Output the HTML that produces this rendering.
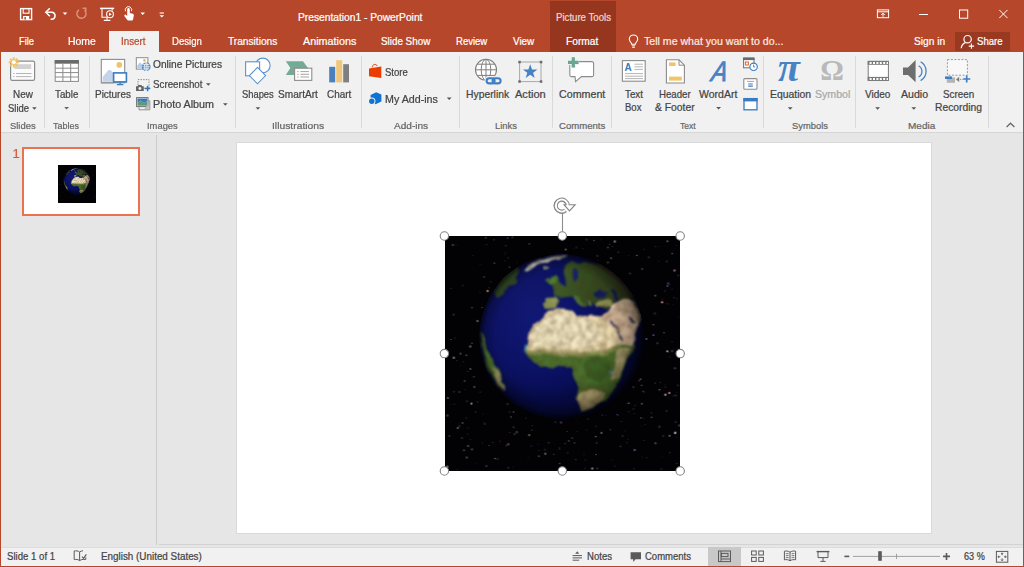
<!DOCTYPE html>
<html><head><meta charset="utf-8"><title>Presentation1 - PowerPoint</title>
<style>
*{box-sizing:border-box;margin:0;padding:0}
html,body{width:1024px;height:567px;overflow:hidden;background:#e6e6e6;font-family:"Liberation Sans",sans-serif}
.abs,.t{position:absolute}
.t{white-space:nowrap;line-height:1;transform-origin:0 0;-webkit-text-stroke:.22px currentColor}
.h{position:absolute;width:9.4px;height:9.4px;border-radius:50%;background:#fff;border:1px solid #7a7a7a;margin:-4.7px 0 0 -4.7px}
</style></head><body>
<svg width="0" height="0" style="position:absolute">
<defs>
<radialGradient id="oc" cx="0.36" cy="0.42" r="0.75">
<stop offset="0" stop-color="#0b1272"/><stop offset=".4" stop-color="#090f62"/><stop offset=".75" stop-color="#060a44"/><stop offset="1" stop-color="#02031a"/>
</radialGradient>
<radialGradient id="sh" cx="0.42" cy="0.4" r="0.72">
<stop offset="0" stop-color="#000" stop-opacity="0"/><stop offset=".55" stop-color="#000" stop-opacity="0"/><stop offset=".82" stop-color="#000" stop-opacity=".3"/><stop offset="1" stop-color="#000" stop-opacity=".88"/>
</radialGradient>
<radialGradient id="lb" cx="0.5" cy="0.5" r="0.5">
<stop offset="0" stop-color="#000" stop-opacity="0"/><stop offset=".8" stop-color="#000" stop-opacity="0"/><stop offset=".93" stop-color="#000" stop-opacity=".22"/><stop offset="1" stop-color="#000" stop-opacity=".7"/>
</radialGradient>
<radialGradient id="hl" cx="0.33" cy="0.3" r="0.6">
<stop offset="0" stop-color="#fff" stop-opacity=".03"/><stop offset="1" stop-color="#fff" stop-opacity="0"/>
</radialGradient>
<linearGradient id="eu" x1="0" y1="0" x2="1" y2="0"><stop offset="0" stop-color="#3c5c27"/><stop offset=".45" stop-color="#304a1d"/><stop offset="1" stop-color="#23301a"/></linearGradient>
<filter id="bl" x="-5%" y="-5%" width="110%" height="110%" color-interpolation-filters="sRGB">
<feTurbulence type="fractalNoise" baseFrequency="0.08" numOctaves="2" seed="4" result="n"/>
<feDisplacementMap in="SourceGraphic" in2="n" scale="6" xChannelSelector="R" yChannelSelector="G" result="d"/>
<feGaussianBlur in="d" stdDeviation="0.95" result="b"/>
<feTurbulence type="fractalNoise" baseFrequency="0.14" numOctaves="2" seed="9" result="n2"/>
<feColorMatrix in="n2" type="matrix" values="0 0 0 0 .28  0 0 0 0 .2  0 0 0 0 .08  0.8 0 0 0 -0.26" result="a"/>
<feGaussianBlur in="a" stdDeviation="0.8" result="a2"/>
<feComposite in="a2" in2="b" operator="in" result="dark"/>
<feMerge><feMergeNode in="b"/><feMergeNode in="dark"/></feMerge>
</filter>
<filter id="sb" x="-5%" y="-5%" width="110%" height="110%"><feGaussianBlur stdDeviation="0.45"/></filter>
<filter id="bl2" x="-20%" y="-20%" width="140%" height="140%"><feGaussianBlur stdDeviation="2.2"/></filter>
<clipPath id="gc"><circle cx="561" cy="336.6" r="82"/></clipPath>
<symbol id="earth" viewBox="444.5 236 235.5 235" preserveAspectRatio="none">
<rect x="444.5" y="236" width="235.5" height="235" fill="#020204"/>
<g filter="url(#sb)"><circle cx="462.9" cy="361.9" r="0.55" fill="#a8a0ff" opacity="0.32"/><circle cx="454.7" cy="338.0" r="0.65" fill="#8080d0" opacity="0.32"/><circle cx="582.4" cy="248.6" r="0.75" fill="#8080d0" opacity="0.2"/><circle cx="479.6" cy="264.4" r="0.75" fill="#a8a0ff" opacity="0.13"/><circle cx="568.4" cy="440.9" r="0.9" fill="#d8d0ff" opacity="0.32"/><circle cx="601.7" cy="415.1" r="1.0" fill="#c080c0" opacity="0.2"/><circle cx="641.7" cy="457.1" r="0.65" fill="#ffe0a0" opacity="0.13"/><circle cx="596.8" cy="468.4" r="0.9" fill="#8080d0" opacity="0.42"/><circle cx="538.7" cy="450.6" r="0.75" fill="#8080d0" opacity="0.26"/><circle cx="574.0" cy="442.8" r="0.9" fill="#8080d0" opacity="0.42"/><circle cx="675.8" cy="396.1" r="0.8" fill="#d8d0ff" opacity="0.16"/><circle cx="487.1" cy="291.0" r="1.25" fill="#ffb0a0" opacity="0.6"/><circle cx="507.2" cy="238.0" r="1.0" fill="#c080c0" opacity="0.32"/><circle cx="668.1" cy="397.9" r="0.55" fill="#8080d0" opacity="0.26"/><circle cx="469.9" cy="369.1" r="1.0" fill="#ffffff" opacity="0.32"/><circle cx="462.4" cy="285.5" r="0.9" fill="#c080c0" opacity="0.2"/><circle cx="673.8" cy="348.9" r="0.75" fill="#c080c0" opacity="0.13"/><circle cx="467.2" cy="434.0" r="0.75" fill="#a8a0ff" opacity="0.2"/><circle cx="644.7" cy="424.8" r="0.8" fill="#e0a0a0" opacity="0.16"/><circle cx="528.8" cy="243.8" r="0.9" fill="#ffe0a0" opacity="0.26"/><circle cx="634.4" cy="405.5" r="1.0" fill="#a8a0ff" opacity="0.13"/><circle cx="469.8" cy="346.5" r="1.25" fill="#ffffff" opacity="0.32"/><circle cx="628.3" cy="411.8" r="0.75" fill="#c080c0" opacity="0.26"/><circle cx="466.2" cy="457.5" r="1.25" fill="#d8d0ff" opacity="0.26"/><circle cx="450.4" cy="339.5" r="0.55" fill="#ffb0a0" opacity="0.6"/><circle cx="575.4" cy="419.7" r="0.55" fill="#a8a0ff" opacity="0.16"/><circle cx="510.5" cy="416.9" r="0.55" fill="#d8d0ff" opacity="0.6"/><circle cx="641.7" cy="269.0" r="1.25" fill="#d8d0ff" opacity="0.2"/><circle cx="664.9" cy="386.9" r="0.9" fill="#e0a0a0" opacity="0.16"/><circle cx="497.2" cy="458.9" r="1.25" fill="#a8a0ff" opacity="0.16"/><circle cx="614.3" cy="241.5" r="1.25" fill="#ffffff" opacity="0.42"/><circle cx="499.3" cy="441.2" r="0.9" fill="#ffb0a0" opacity="0.13"/><circle cx="509.0" cy="267.2" r="0.9" fill="#ffb0a0" opacity="0.26"/><circle cx="488.7" cy="445.6" r="0.55" fill="#d8d0ff" opacity="0.42"/><circle cx="461.5" cy="438.0" r="1.0" fill="#8080d0" opacity="0.32"/><circle cx="661.9" cy="299.4" r="0.8" fill="#ffb0a0" opacity="0.13"/><circle cx="633.3" cy="468.7" r="0.55" fill="#a8a0ff" opacity="0.42"/><circle cx="492.3" cy="442.5" r="0.75" fill="#c080c0" opacity="0.26"/><circle cx="674.8" cy="432.0" r="0.9" fill="#ffb0a0" opacity="0.26"/><circle cx="458.9" cy="392.0" r="0.9" fill="#a8a0ff" opacity="0.32"/><circle cx="607.4" cy="247.5" r="0.9" fill="#ffffff" opacity="0.26"/><circle cx="507.6" cy="257.9" r="0.55" fill="#ffffff" opacity="0.26"/><circle cx="669.1" cy="435.8" r="1.1" fill="#c080c0" opacity="0.6"/><circle cx="611.7" cy="459.8" r="0.65" fill="#ffffff" opacity="0.13"/><circle cx="477.0" cy="321.0" r="1.25" fill="#ffffff" opacity="0.32"/><circle cx="504.8" cy="254.3" r="0.8" fill="#e0a0a0" opacity="0.16"/><circle cx="605.3" cy="415.7" r="0.8" fill="#ffb0a0" opacity="0.13"/><circle cx="559.2" cy="463.6" r="0.8" fill="#e0a0a0" opacity="0.42"/><circle cx="671.6" cy="341.7" r="0.8" fill="#d8d0ff" opacity="0.16"/><circle cx="564.5" cy="443.6" r="0.8" fill="#e0a0a0" opacity="0.26"/><circle cx="538.8" cy="456.0" r="0.55" fill="#ffe0a0" opacity="0.42"/><circle cx="505.0" cy="252.1" r="0.65" fill="#8080d0" opacity="0.2"/><circle cx="622.1" cy="436.0" r="0.55" fill="#ffe0a0" opacity="0.6"/><circle cx="663.5" cy="332.7" r="0.75" fill="#ffe0a0" opacity="0.42"/><circle cx="559.1" cy="449.5" r="0.75" fill="#8080d0" opacity="0.26"/><circle cx="673.5" cy="297.6" r="0.9" fill="#8080d0" opacity="0.26"/><circle cx="473.9" cy="386.9" r="1.25" fill="#a8a0ff" opacity="0.32"/><circle cx="531.8" cy="425.6" r="0.55" fill="#8080d0" opacity="0.42"/><circle cx="509.0" cy="412.2" r="1.0" fill="#a8a0ff" opacity="0.16"/><circle cx="467.6" cy="446.0" r="1.25" fill="#ffe0a0" opacity="0.26"/><circle cx="643.7" cy="440.4" r="0.55" fill="#e0a0a0" opacity="0.26"/><circle cx="671.6" cy="351.1" r="1.25" fill="#a8a0ff" opacity="0.26"/><circle cx="465.8" cy="418.0" r="0.75" fill="#ffffff" opacity="0.16"/><circle cx="586.0" cy="239.4" r="1.25" fill="#c080c0" opacity="0.2"/><circle cx="596.2" cy="442.9" r="0.8" fill="#a8a0ff" opacity="0.32"/><circle cx="596.8" cy="255.9" r="1.1" fill="#a8a0ff" opacity="0.2"/><circle cx="514.1" cy="433.9" r="1.25" fill="#ffe0a0" opacity="0.16"/><circle cx="507.8" cy="444.2" r="1.25" fill="#ffb0a0" opacity="0.32"/><circle cx="472.4" cy="255.5" r="0.8" fill="#e0a0a0" opacity="0.16"/><circle cx="453.4" cy="391.8" r="1.0" fill="#e0a0a0" opacity="0.2"/><circle cx="485.4" cy="237.7" r="1.0" fill="#d8d0ff" opacity="0.26"/><circle cx="466.4" cy="401.3" r="1.25" fill="#c080c0" opacity="0.16"/><circle cx="530.9" cy="446.0" r="1.1" fill="#8080d0" opacity="0.16"/><circle cx="455.5" cy="245.1" r="0.55" fill="#a8a0ff" opacity="0.2"/><circle cx="620.1" cy="446.4" r="0.9" fill="#ffffff" opacity="0.2"/><circle cx="507.1" cy="404.0" r="0.9" fill="#ffffff" opacity="0.2"/><circle cx="471.0" cy="403.7" r="1.1" fill="#ffe0a0" opacity="0.6"/><circle cx="658.9" cy="426.8" r="1.25" fill="#ffffff" opacity="0.16"/><circle cx="633.0" cy="409.1" r="0.75" fill="#a8a0ff" opacity="0.32"/><circle cx="628.3" cy="255.4" r="0.75" fill="#8080d0" opacity="0.16"/><circle cx="676.2" cy="298.7" r="0.65" fill="#e0a0a0" opacity="0.26"/><circle cx="676.3" cy="463.5" r="0.75" fill="#e0a0a0" opacity="0.26"/><circle cx="643.3" cy="391.8" r="0.9" fill="#ffe0a0" opacity="0.2"/><circle cx="481.7" cy="443.0" r="1.0" fill="#8080d0" opacity="0.13"/><circle cx="597.4" cy="260.4" r="0.55" fill="#ffffff" opacity="0.13"/><circle cx="659.0" cy="246.4" r="0.65" fill="#a8a0ff" opacity="0.13"/><circle cx="585.9" cy="429.9" r="0.65" fill="#ffb0a0" opacity="0.2"/><circle cx="666.3" cy="261.6" r="1.0" fill="#ffffff" opacity="0.16"/><circle cx="493.4" cy="239.7" r="1.0" fill="#ffe0a0" opacity="0.16"/><circle cx="676.3" cy="392.6" r="0.55" fill="#c080c0" opacity="0.2"/><circle cx="632.9" cy="387.2" r="1.1" fill="#ffffff" opacity="0.16"/><circle cx="467.1" cy="371.6" r="0.75" fill="#ffffff" opacity="0.16"/><circle cx="483.7" cy="277.0" r="1.1" fill="#a8a0ff" opacity="0.26"/><circle cx="516.3" cy="432.1" r="1.25" fill="#ffffff" opacity="0.2"/><circle cx="595.2" cy="436.6" r="0.8" fill="#e0a0a0" opacity="0.6"/><circle cx="488.6" cy="287.8" r="0.75" fill="#c080c0" opacity="0.26"/><circle cx="655.1" cy="246.6" r="0.55" fill="#c080c0" opacity="0.42"/><circle cx="473.4" cy="376.7" r="0.9" fill="#8080d0" opacity="0.42"/><circle cx="446.8" cy="466.8" r="1.25" fill="#e0a0a0" opacity="0.6"/><circle cx="640.9" cy="425.9" r="0.65" fill="#c080c0" opacity="0.16"/><circle cx="565.2" cy="249.6" r="1.1" fill="#ffb0a0" opacity="0.42"/><circle cx="607.4" cy="262.5" r="1.25" fill="#ffb0a0" opacity="0.2"/><circle cx="640.1" cy="379.2" r="1.0" fill="#ffe0a0" opacity="0.32"/><circle cx="656.9" cy="343.3" r="1.25" fill="#ffe0a0" opacity="0.16"/><circle cx="654.8" cy="295.7" r="1.1" fill="#c080c0" opacity="0.42"/><circle cx="507.7" cy="467.8" r="1.0" fill="#d8d0ff" opacity="0.2"/><circle cx="457.3" cy="428.0" r="1.0" fill="#ffffff" opacity="0.42"/><circle cx="531.3" cy="430.0" r="0.55" fill="#a8a0ff" opacity="0.6"/><circle cx="479.7" cy="392.1" r="0.9" fill="#ffffff" opacity="0.13"/><circle cx="456.3" cy="360.8" r="0.8" fill="#ffffff" opacity="0.16"/><circle cx="658.4" cy="261.4" r="0.8" fill="#8080d0" opacity="0.16"/><circle cx="595.5" cy="426.5" r="0.9" fill="#ffe0a0" opacity="0.13"/><circle cx="591.8" cy="468.6" r="1.25" fill="#ffffff" opacity="0.42"/><circle cx="464.8" cy="389.7" r="0.65" fill="#a8a0ff" opacity="0.2"/><circle cx="661.6" cy="456.7" r="0.55" fill="#8080d0" opacity="0.2"/><circle cx="465.9" cy="355.2" r="0.8" fill="#a8a0ff" opacity="0.6"/><circle cx="666.1" cy="410.9" r="1.1" fill="#a8a0ff" opacity="0.2"/><circle cx="674.7" cy="433.1" r="1.25" fill="#ffffff" opacity="0.6"/><circle cx="645.8" cy="338.9" r="0.9" fill="#a8a0ff" opacity="0.6"/><circle cx="486.0" cy="244.7" r="0.75" fill="#ffb0a0" opacity="0.2"/><circle cx="609.3" cy="244.2" r="0.55" fill="#d8d0ff" opacity="0.42"/><circle cx="617.7" cy="252.3" r="1.0" fill="#d8d0ff" opacity="0.16"/><circle cx="651.0" cy="413.1" r="1.1" fill="#a8a0ff" opacity="0.13"/><circle cx="493.9" cy="263.1" r="0.65" fill="#ffe0a0" opacity="0.6"/><circle cx="453.3" cy="357.8" r="1.25" fill="#ffffff" opacity="0.42"/><circle cx="467.2" cy="428.0" r="0.55" fill="#a8a0ff" opacity="0.32"/><circle cx="513.2" cy="411.9" r="1.0" fill="#d8d0ff" opacity="0.26"/><circle cx="560.5" cy="422.6" r="1.25" fill="#c080c0" opacity="0.32"/><circle cx="669.0" cy="357.0" r="0.75" fill="#a8a0ff" opacity="0.2"/><circle cx="664.6" cy="290.9" r="0.65" fill="#d8d0ff" opacity="0.26"/><circle cx="537.9" cy="444.5" r="0.55" fill="#a8a0ff" opacity="0.2"/><circle cx="485.9" cy="465.9" r="1.25" fill="#ffffff" opacity="0.16"/><circle cx="642.4" cy="391.3" r="0.75" fill="#e0a0a0" opacity="0.26"/><circle cx="638.6" cy="380.8" r="0.8" fill="#c080c0" opacity="0.42"/><circle cx="677.8" cy="275.4" r="0.8" fill="#ffb0a0" opacity="0.26"/><circle cx="675.2" cy="422.2" r="1.1" fill="#a8a0ff" opacity="0.2"/><circle cx="471.5" cy="449.4" r="1.1" fill="#ffffff" opacity="0.26"/><circle cx="448.9" cy="436.1" r="0.8" fill="#ffe0a0" opacity="0.32"/><circle cx="651.1" cy="417.4" r="0.8" fill="#ffb0a0" opacity="0.42"/><circle cx="628.3" cy="403.2" r="0.9" fill="#8080d0" opacity="0.6"/><circle cx="654.4" cy="313.4" r="1.25" fill="#ffffff" opacity="0.13"/><circle cx="667.7" cy="283.6" r="1.25" fill="#a8a0ff" opacity="0.32"/><circle cx="666.9" cy="286.0" r="1.1" fill="#d8d0ff" opacity="0.32"/><circle cx="463.5" cy="450.3" r="1.0" fill="#ffe0a0" opacity="0.32"/><circle cx="471.5" cy="307.7" r="0.8" fill="#8080d0" opacity="0.6"/><circle cx="462.1" cy="423.0" r="0.8" fill="#ffb0a0" opacity="0.6"/><circle cx="528.7" cy="435.2" r="1.1" fill="#ffe0a0" opacity="0.42"/><circle cx="675.0" cy="395.2" r="0.9" fill="#a8a0ff" opacity="0.2"/><circle cx="481.6" cy="307.6" r="0.65" fill="#c080c0" opacity="0.6"/><circle cx="593.5" cy="240.5" r="0.65" fill="#ffe0a0" opacity="0.42"/><circle cx="504.3" cy="260.7" r="0.8" fill="#e0a0a0" opacity="0.16"/><circle cx="587.7" cy="419.0" r="0.9" fill="#e0a0a0" opacity="0.16"/><circle cx="548.2" cy="442.7" r="0.9" fill="#a8a0ff" opacity="0.26"/><circle cx="558.9" cy="448.0" r="0.8" fill="#ffb0a0" opacity="0.26"/><circle cx="571.7" cy="438.1" r="1.0" fill="#e0a0a0" opacity="0.26"/><circle cx="601.0" cy="432.9" r="1.1" fill="#d8d0ff" opacity="0.42"/><circle cx="678.8" cy="425.4" r="1.25" fill="#ffb0a0" opacity="0.26"/><circle cx="453.9" cy="404.3" r="1.0" fill="#c080c0" opacity="0.13"/><circle cx="525.5" cy="418.4" r="0.8" fill="#8080d0" opacity="0.2"/><circle cx="475.7" cy="463.7" r="0.55" fill="#8080d0" opacity="0.26"/><circle cx="573.1" cy="248.6" r="0.55" fill="#a8a0ff" opacity="0.13"/><circle cx="460.0" cy="353.7" r="1.1" fill="#ffb0a0" opacity="0.32"/><circle cx="659.0" cy="389.8" r="0.75" fill="#ffe0a0" opacity="0.6"/><circle cx="595.5" cy="454.6" r="0.55" fill="#d8d0ff" opacity="0.6"/><circle cx="584.4" cy="468.4" r="0.75" fill="#8080d0" opacity="0.26"/><circle cx="654.7" cy="383.1" r="0.55" fill="#d8d0ff" opacity="0.42"/><circle cx="675.9" cy="437.0" r="0.65" fill="#e0a0a0" opacity="0.16"/><circle cx="450.1" cy="404.6" r="0.75" fill="#c080c0" opacity="0.13"/><circle cx="626.3" cy="403.3" r="0.65" fill="#e0a0a0" opacity="0.2"/><circle cx="553.3" cy="454.2" r="0.55" fill="#ffffff" opacity="0.42"/><circle cx="636.4" cy="255.6" r="0.75" fill="#e0a0a0" opacity="0.6"/><circle cx="484.2" cy="423.8" r="1.25" fill="#c080c0" opacity="0.2"/><circle cx="609.9" cy="429.8" r="0.55" fill="#ffb0a0" opacity="0.6"/><circle cx="652.9" cy="324.8" r="0.8" fill="#e0a0a0" opacity="0.6"/><circle cx="512.0" cy="237.4" r="1.1" fill="#ffffff" opacity="0.16"/><circle cx="614.3" cy="465.9" r="0.55" fill="#8080d0" opacity="0.42"/><circle cx="621.0" cy="421.5" r="0.65" fill="#c080c0" opacity="0.32"/><circle cx="655.0" cy="443.2" r="1.25" fill="#a8a0ff" opacity="0.32"/><circle cx="490.1" cy="281.8" r="0.9" fill="#c080c0" opacity="0.2"/><circle cx="456.4" cy="469.3" r="0.65" fill="#e0a0a0" opacity="0.2"/><circle cx="629.5" cy="273.4" r="1.0" fill="#ffffff" opacity="0.2"/><circle cx="661.6" cy="302.2" r="1.25" fill="#ffb0a0" opacity="0.6"/><circle cx="505.2" cy="245.8" r="0.75" fill="#d8d0ff" opacity="0.26"/><circle cx="452.4" cy="245.1" r="1.25" fill="#d8d0ff" opacity="0.26"/><circle cx="610.6" cy="258.0" r="0.8" fill="#d8d0ff" opacity="0.42"/><circle cx="668.8" cy="393.0" r="1.25" fill="#ffb0a0" opacity="0.6"/><circle cx="459.8" cy="365.8" r="0.55" fill="#e0a0a0" opacity="0.2"/><circle cx="664.9" cy="394.7" r="1.25" fill="#d8d0ff" opacity="0.6"/><circle cx="634.2" cy="450.0" r="1.25" fill="#a8a0ff" opacity="0.42"/><circle cx="464.1" cy="381.1" r="0.75" fill="#e0a0a0" opacity="0.6"/><circle cx="669.2" cy="452.7" r="0.55" fill="#d8d0ff" opacity="0.42"/><circle cx="509.2" cy="432.6" r="0.75" fill="#e0a0a0" opacity="0.2"/><circle cx="471.5" cy="343.3" r="0.75" fill="#ffffff" opacity="0.32"/><circle cx="576.5" cy="431.6" r="0.8" fill="#8080d0" opacity="0.2"/><circle cx="676.9" cy="469.6" r="0.65" fill="#ffe0a0" opacity="0.26"/><circle cx="674.0" cy="270.6" r="1.25" fill="#c080c0" opacity="0.6"/><circle cx="665.9" cy="303.7" r="0.55" fill="#a8a0ff" opacity="0.26"/><circle cx="616.3" cy="414.4" r="0.75" fill="#a8a0ff" opacity="0.32"/><circle cx="458.9" cy="425.9" r="1.25" fill="#ffffff" opacity="0.13"/><circle cx="675.7" cy="245.5" r="0.55" fill="#e0a0a0" opacity="0.2"/><circle cx="671.7" cy="253.6" r="0.8" fill="#c080c0" opacity="0.6"/><circle cx="627.5" cy="439.3" r="0.55" fill="#d8d0ff" opacity="0.2"/><circle cx="668.3" cy="352.3" r="0.75" fill="#a8a0ff" opacity="0.13"/><circle cx="671.4" cy="289.1" r="0.65" fill="#ffe0a0" opacity="0.2"/><circle cx="575.4" cy="459.6" r="0.8" fill="#ffffff" opacity="0.2"/><circle cx="641.1" cy="385.4" r="0.8" fill="#e0a0a0" opacity="0.42"/><circle cx="470.0" cy="439.6" r="0.55" fill="#d8d0ff" opacity="0.2"/><circle cx="666.9" cy="241.3" r="1.1" fill="#ffffff" opacity="0.32"/><circle cx="538.2" cy="456.3" r="1.0" fill="#a8a0ff" opacity="0.26"/><circle cx="641.4" cy="403.7" r="1.0" fill="#8080d0" opacity="0.6"/><circle cx="643.5" cy="249.5" r="1.0" fill="#8080d0" opacity="0.16"/><circle cx="600.5" cy="239.7" r="0.75" fill="#c080c0" opacity="0.13"/><circle cx="664.3" cy="384.5" r="0.55" fill="#ffe0a0" opacity="0.13"/><circle cx="659.9" cy="382.3" r="0.55" fill="#d8d0ff" opacity="0.32"/><circle cx="667.6" cy="304.0" r="0.75" fill="#ffffff" opacity="0.13"/><circle cx="584.5" cy="459.8" r="0.9" fill="#e0a0a0" opacity="0.13"/><circle cx="583.5" cy="454.1" r="0.75" fill="#8080d0" opacity="0.2"/><circle cx="453.2" cy="314.7" r="1.1" fill="#8080d0" opacity="0.32"/><circle cx="512.4" cy="467.1" r="0.55" fill="#d8d0ff" opacity="0.16"/><circle cx="566.5" cy="431.4" r="0.65" fill="#a8a0ff" opacity="0.32"/><circle cx="660.8" cy="469.0" r="0.75" fill="#d8d0ff" opacity="0.26"/><circle cx="447.0" cy="415.4" r="1.25" fill="#ffb0a0" opacity="0.26"/><circle cx="669.4" cy="284.6" r="0.55" fill="#ffffff" opacity="0.13"/><circle cx="505.8" cy="445.7" r="0.9" fill="#8080d0" opacity="0.32"/><circle cx="527.8" cy="457.9" r="0.8" fill="#8080d0" opacity="0.13"/><circle cx="678.1" cy="317.0" r="0.65" fill="#c080c0" opacity="0.16"/><circle cx="652.9" cy="335.1" r="0.9" fill="#a8a0ff" opacity="0.6"/><circle cx="677.5" cy="385.3" r="1.1" fill="#ffffff" opacity="0.13"/><circle cx="516.9" cy="433.2" r="0.55" fill="#ffb0a0" opacity="0.16"/><circle cx="482.5" cy="414.0" r="0.65" fill="#ffb0a0" opacity="0.13"/><circle cx="666.8" cy="351.3" r="1.1" fill="#ffffff" opacity="0.6"/><circle cx="479.5" cy="292.5" r="0.55" fill="#d8d0ff" opacity="0.2"/><circle cx="646.2" cy="457.8" r="0.8" fill="#8080d0" opacity="0.26"/><circle cx="450.6" cy="288.3" r="0.55" fill="#ffffff" opacity="0.26"/><circle cx="662.9" cy="436.1" r="1.25" fill="#8080d0" opacity="0.2"/><circle cx="586.4" cy="460.7" r="0.65" fill="#8080d0" opacity="0.16"/><circle cx="648.3" cy="257.4" r="1.1" fill="#ffffff" opacity="0.16"/><circle cx="672.4" cy="304.7" r="0.65" fill="#8080d0" opacity="0.2"/><circle cx="544.4" cy="449.7" r="1.1" fill="#e0a0a0" opacity="0.16"/><circle cx="610.5" cy="258.6" r="0.75" fill="#e0a0a0" opacity="0.32"/><circle cx="554.8" cy="422.2" r="1.0" fill="#a8a0ff" opacity="0.2"/><circle cx="494.5" cy="458.6" r="0.8" fill="#e0a0a0" opacity="0.6"/><circle cx="475.2" cy="411.9" r="0.65" fill="#ffe0a0" opacity="0.32"/><circle cx="617.5" cy="415.2" r="0.75" fill="#ffffff" opacity="0.2"/><circle cx="644.3" cy="311.8" r="0.65" fill="#c080c0" opacity="0.13"/><circle cx="633.6" cy="413.7" r="0.9" fill="#a8a0ff" opacity="0.13"/><circle cx="513.2" cy="427.3" r="1.0" fill="#e0a0a0" opacity="0.26"/><circle cx="626.6" cy="442.7" r="0.75" fill="#ffb0a0" opacity="0.2"/><circle cx="612.0" cy="246.4" r="0.75" fill="#a8a0ff" opacity="0.26"/><circle cx="567.3" cy="452.7" r="1.0" fill="#d8d0ff" opacity="0.13"/><circle cx="640.4" cy="417.9" r="0.55" fill="#ffffff" opacity="0.6"/><circle cx="673.0" cy="395.7" r="1.0" fill="#c080c0" opacity="0.16"/><circle cx="544.8" cy="453.7" r="1.25" fill="#ffffff" opacity="0.32"/><circle cx="643.2" cy="418.3" r="0.8" fill="#ffe0a0" opacity="0.13"/><circle cx="447.4" cy="398.1" r="1.0" fill="#ffe0a0" opacity="0.42"/><circle cx="477.1" cy="401.9" r="0.8" fill="#d8d0ff" opacity="0.2"/><circle cx="624.5" cy="430.7" r="0.9" fill="#c080c0" opacity="0.13"/><circle cx="516.8" cy="262.8" r="0.65" fill="#c080c0" opacity="0.16"/><circle cx="575.9" cy="247.6" r="1.25" fill="#c080c0" opacity="0.13"/><circle cx="674.4" cy="368.3" r="1.25" fill="#e0a0a0" opacity="0.26"/></g>
<circle cx="561" cy="336.6" r="82.5" fill="#010208"/>
<circle cx="561" cy="336.6" r="82" fill="url(#oc)"/>
<g clip-path="url(#gc)">
<g filter="url(#bl)">
<!-- north america -->
<path d="M494 292 L498 280 L506 270 L516 264 L520 270 L514 276 L516 284 L508 286 L503 294 L497 297z" fill="#2f4f24"/>
<!-- greenland / ice -->
<path d="M524 271 L528 264 L540 259 L556 255.5 L568 255.8 L562 258.4 L548 261.4 L536 266 L528 271.6z" fill="#e4e4d8"/>
<path d="M543.6 267.6 l4 -1 l1 1.6 l-4 1.2z" fill="#b9c29a"/>
<!-- south america -->
<path d="M479 330 L482.6 333 L485.4 348 L491.6 362 L501 374 L503 382 L504 392 L498 386 L491 375 L484 360 L480.4 346z" fill="#5a8a34"/>
<path d="M492 366 L500 375 L502.6 383 L503.6 391 L499 386 L494 376z" fill="#b9b078"/>
<!-- europe main -->
<path d="M553 289 L551 284 L556 281 L560 284 L565.6 285.6 L565 279 L563 272 L566 265 L572 262 L580 263 L590 262 L602 266 L616 276 L627 287 L634 299 L628 300 L622 302 L616 300 L611 304 L608 309 L600 308 L594 305 L590 301 L586 300 L588 306 L584 306 L578 300 L572 296 L566 297 L560 298 L555 296z" fill="url(#eu)"/>
<path d="M596 262 L612 270 L626 284 L636 300 L640 312 L632 300 L620 286 L606 272z" fill="#3a3a22"/>
<!-- britain -->
<path d="M548 282 l3 -5 l4 -2 l2 4 l-2 5 l-5 2z" fill="#4b7d2c"/>
<path d="M545.6 281 l2 -2.4 l1.4 2 l-1.8 2.4z" fill="#4b7d2c"/>
<!-- baltic / north sea -->
<path d="M571 270 l3 -2 l3 4 l1 7 l-3 3 l-2 -5z" fill="#0c1a70"/>
<!-- iberia -->
<path d="M542.4 303.4 L545.6 298 L556.4 297.6 L558.6 302.6 L553.6 308.4 L544.4 308.8z" fill="#8f9a54"/>
<!-- italy greece turkey -->
<path d="M571 296 L575 296 L581 302 L585.6 307 L583 307.6 L577 302z" fill="#4f7a30"/>
<path d="M586 300 l4 1 l1.6 5 l-3 -.6z" fill="#5f7f38"/>
<path d="M593.6 303.4 L600 300.4 L610 300.6 L612 305 L604 307.6 L596 307z" fill="#8a8a52"/>
<!-- black sea, caspian -->
<path d="M593.4 293 L599 290.4 L607.6 292.6 L606 297.4 L598 298z" fill="#0a1560"/>
<path d="M611.6 288 L616 291 L620.6 299 L618 301.4 L613.6 295.6z" fill="#081050"/>
<!-- africa green -->
<path d="M524.6 350 L540 350 L576 352 L604 350.6 L618 344 L634 344 L629 356 L620 374 L609.6 395 L594 407.6 L581 411.6 L575.4 399 L578.4 386.4 L572 377.6 L572.6 370 L561.8 366 L548 368 L540.4 367 L530 359z" fill="#4a702c"/>
<path d="M584 360 L606 356 L612 372 L600 384 L586 378z" fill="#3a6224"/>
<!-- southern africa dry -->
<path d="M578 392 L590 388 L604 392 L600 402 L590 408.6 L581 411 L576 400z" fill="#b8a874"/>
<path d="M616 350 L630 346 L626 360 L616 378 L610 380 L614 364z" fill="#a8a070"/>
<!-- sahara -->
<path d="M524.4 350.6 L526.2 344 L528.2 333 L539.6 319 L547.6 311 L561.6 308.4 L571.4 309.4 L576 315.6 L586.4 318.2 L590 314.6 L600.6 315.6 L609.4 310.4 L611 305 L623.4 298 L634 303.4 L640 316 L637 330 L631 345 L618.4 344.6 L604 351.4 L576 353.4 L540.6 351.6z" fill="#ead8ae"/>
<path d="M600 316 L610 310 L622 300 L634 304 L640 316 L637 330 L631 345 L619 344 L612 330z" fill="#d4b89c"/>
<path d="M530 334 L544 318 L566 312 L580 320 L596 324 L604 338 L590 347 L556 348 L534 346z" fill="#f4e8c4"/>
<path d="M524 349 L545 349.5 L580 351 L606 349 L620 343 L621 347 L606 354.5 L578 356.5 L542 355 L525 354z" fill="#98965a" opacity=".7"/>
<!-- red sea / gulf -->
<path d="M609.4 320 L611 319.6 L622 341 L620.6 342.4z" fill="#141a50"/>
<path d="M625 315 l7 2.6 l3.4 4 l-2 .6 l-4.6 -3.6z" fill="#141a50"/>
<!-- lake victoria -->
<circle cx="611" cy="371.6" r="2" fill="#3b8fb0"/>
<!-- coast glow -->
<path d="M524.4 351 l1 -8" stroke="#2f8fa8" stroke-width="1.6" fill="none"/>
</g>
<circle cx="561" cy="336.6" r="82" fill="url(#hl)"/>
<circle cx="561" cy="336.6" r="82" fill="url(#sh)"/>
<circle cx="561" cy="336.6" r="82.4" fill="url(#lb)"/>
</g>
</symbol>
</defs></svg>
<div class="abs" style="left:0;top:0;width:1024px;height:52px;background:#b7472a"></div>
<div class="abs" style="left:550px;top:1px;width:66px;height:51px;background:#96361f"></div>
<div class="abs" style="left:109px;top:31px;width:50px;height:21px;background:#f1f1f1"></div>
<div class="abs" style="left:954.5px;top:31.5px;width:55px;height:19.5px;background:#993921"></div>
<div class="abs" style="left:1px;top:52px;width:1022px;height:80px;background:#f1f1f1"></div>
<div class="abs" style="left:1px;top:132px;width:1022px;height:1px;background:#d6d6d6"></div>
<div class="abs" style="left:156px;top:135px;width:1px;height:410px;background:#cdcdcd"></div>
<div class="abs" style="left:159px;top:544px;width:864px;height:1px;background:#d2d2d2"></div>
<div class="abs" style="left:1px;top:547px;width:1022px;height:19px;background:#f1f1f1;border-top:1px solid #dcdcdc"></div>
<div class="abs" style="left:708px;top:547px;width:32.5px;height:19px;background:#c8c8c8"></div>
<div class="abs" style="left:235.5px;top:141.5px;width:696px;height:392px;background:#fff;border:1px solid #d9d9d9"></div>
<div class="abs" style="left:21.5px;top:147px;width:118.5px;height:68.5px;background:#fff;border:2px solid #ea7250"></div>
<svg class="abs" style="left:58px;top:164.6px" width="38.4" height="38"><use href="#earth" width="38.4" height="38"/></svg>
<svg class="abs" style="left:444.5px;top:236px" width="235.5" height="235"><use href="#earth" width="235.5" height="235"/></svg>
<svg class="abs" style="left:540px;top:190px" width="50" height="50" viewBox="540 190 50 50" fill="none" stroke="#8a8a8a">
<path d="M562.5 213 V231.5" stroke-width="1.1" stroke="#8c8c8c"/>
<path d="M565.5 210.3 A6 6 0 1 1 567.6 205.2" stroke-width="4.3" stroke="#858585"/>
<path d="M564 204.7 L575.2 204.7 L569.5 210.9z" fill="#fff" stroke="#858585" stroke-width="1.1" stroke-linejoin="miter"/>
<path d="M565.5 210.3 A6 6 0 1 1 567.8 205.8" stroke-width="1.9" stroke="#fff"/>
</svg>
<svg class="abs" style="left:430px;top:225px" width="265" height="260" viewBox="430 225 265 260"><circle cx="444.4" cy="236" r="4.2" fill="#fff" stroke="#858585" stroke-width="1.1"/><circle cx="562.3" cy="236" r="4.2" fill="#fff" stroke="#858585" stroke-width="1.1"/><circle cx="680.2" cy="236" r="4.2" fill="#fff" stroke="#858585" stroke-width="1.1"/><circle cx="444.4" cy="353.6" r="4.2" fill="#fff" stroke="#858585" stroke-width="1.1"/><circle cx="680.2" cy="353.6" r="4.2" fill="#fff" stroke="#858585" stroke-width="1.1"/><circle cx="444.4" cy="471" r="4.2" fill="#fff" stroke="#858585" stroke-width="1.1"/><circle cx="562.3" cy="471" r="4.2" fill="#fff" stroke="#858585" stroke-width="1.1"/><circle cx="680.2" cy="471" r="4.2" fill="#fff" stroke="#858585" stroke-width="1.1"/></svg>
<svg class="abs" style="left:0;top:0" width="1024" height="52" viewBox="0 0 1024 52" fill="none" stroke="#fff" stroke-width="1.1">
<!-- save -->
<rect x="20.6" y="8.6" width="11" height="11" stroke-width="1.4"/>
<rect x="23.2" y="8.6" width="5.8" height="4.6" stroke-width="1.1"/>
<rect x="23" y="16" width="6.2" height="3.6" fill="#fff" stroke="none"/>
<rect x="24.4" y="17" width="1.5" height="2.6" fill="#b7472a" stroke="none"/>
<!-- undo -->
<path d="M46.2 12.2 H52.3 A3.6 3.6 0 0 1 52.3 19.2 H50.6" stroke-width="1.5"/>
<path d="M49.8 8.2 L45.8 12.2 L49.8 16.2" stroke-width="1.5"/>
<path d="M62.7 12.4 h4.6 l-2.3 2.5z" fill="#fff" stroke="none"/>
<!-- redo dim -->
<g stroke="#d9937f" stroke-width="1.4">
<path d="M84.5 10.2 A4.6 4.6 0 1 1 79 9.8"/>
<path d="M82.6 8.3 h3.2 v3.2" />
</g>
<!-- slideshow -->
<path d="M100 8.4 H114.2" stroke-width="1.5"/>
<path d="M102 9 V17.3 H107.5 M112.2 9 V10.5" stroke-width="1.1"/>
<circle cx="110" cy="14.2" r="3.4" stroke-width="1.1"/>
<path d="M109 12.5 L111.8 14.2 L109 15.9z" fill="#fff" stroke="none"/>
<path d="M107 17.5 V20.2 M103.8 20.4 H110.4" stroke-width="1.1"/>
<!-- touch -->
<path d="M127.2 13.5 V9.3 a1.3 1.3 0 0 1 2.6 0 V13 l3 .8 a1.4 1.4 0 0 1 1 1.6 l-.7 4 a1.2 1.2 0 0 1 -1.2 1 h-3.6 a1.5 1.5 0 0 1 -1.2 -.6 l-2.6 -3.6 a1 1 0 0 1 1.4 -1.4 l1.3 1.2z" fill="#fff" stroke="none"/>
<path d="M125.6 11.2 A3.2 3.2 0 1 1 131.4 11.2" stroke-width="1"/>
<path d="M140.4 12.4 h4.6 l-2.3 2.5z" fill="#fff" stroke="none"/>
<!-- customize qat -->
<path d="M159.6 13 h4.4" stroke-width="1.1"/>
<path d="M159.5 15.2 h4.6 l-2.3 2.4z" fill="#fff" stroke="none"/>
<!-- bulb -->
<path d="M631.7 44.2 c0 -1.6 -2.4 -2.6 -2.4 -5 a4.2 4.2 0 0 1 8.4 0 c0 2.4 -2.4 3.4 -2.4 5z" stroke-width="1.1"/>
<path d="M631.8 45.8 h3.4 M632.2 47.3 h2.6" stroke-width="1"/>
<!-- ribbon display options -->
<rect x="877.4" y="9.9" width="11.2" height="7.8" stroke-width="1"/>
<path d="M877.4 11.8 h11.2" stroke-width="1"/>
<path d="M883 16.8 v-3.4 M881.2 15 l1.8 -1.8 l1.8 1.8" stroke-width="1"/>
<!-- min max close -->
<path d="M919 14.5 h9" stroke-width="1"/>
<rect x="959.5" y="10" width="8.2" height="8.2" stroke-width="1"/>
<path d="M999.3 9.9 l8.2 8.2 M1007.5 9.9 l-8.2 8.2" stroke-width="1"/>
<!-- share person -->
<circle cx="967.6" cy="39.2" r="3.7" stroke-width="1.2"/>
<path d="M961.2 48.2 c.4 -3.2 2 -4.8 4.2 -5.6" stroke-width="1.2"/>
<path d="M971.4 43.4 v5.4 M968.7 46.1 h5.4" stroke-width="1.1"/>
</svg>
<svg class="abs" style="left:0;top:52px" width="1024" height="80" viewBox="0 52 1024 80" fill="none">
<!-- separators -->
<g stroke="#d9d9d9" stroke-width="1">
<path d="M44.5 56 V128 M89.5 56 V128 M235.5 56 V128 M361.5 56 V128 M459.5 56 V128 M552.5 56 V128 M611.5 56 V128 M763.5 56 V128 M855.5 56 V128 M988.5 56 V128"/>
</g>
<!-- new slide -->
<rect x="10.6" y="61.2" width="24" height="19.2" rx="1.6" fill="#fbfbfb" stroke="#8c8c8c" stroke-width="1.2"/>
<rect x="14.4" y="64.2" width="16.8" height="4.8" fill="#d2d2d2"/>
<path d="M16 73.5 H31.5 M16 76.6 H31.5" stroke="#b5b5b5" stroke-width="1"/>
<path d="M13.2 73.5 h1.4 M13.2 76.6 h1.4" stroke="#b5b5b5" stroke-width="1"/>
<g stroke="#f1c267" stroke-width="2" stroke-linecap="butt">
<path d="M13.8 57.2 V67.4 M8.7 62.3 H18.9 M10.2 58.7 L17.4 65.9 M17.4 58.7 L10.2 65.9"/>
</g>
<circle cx="13.8" cy="62.3" r="2" fill="#fff"/>
<!-- table -->
<rect x="55.2" y="60.6" width="23.2" height="20.8" fill="#fff" stroke="#8c8c8c" stroke-width="1"/>
<rect x="54.7" y="60.1" width="24.2" height="3.6" fill="#6a6a6a"/>
<path d="M55 68.2 H78.6 M55 72.6 H78.6 M55 77 H78.6 M62.9 63.7 V81.4 M70.7 63.7 V81.4" stroke="#8c8c8c" stroke-width="1"/>
<path d="M64.2 107 h4.8 l-2.4 2.6z" fill="#666"/>
<!-- new slide arrow -->
<path d="M32.1 107.2 h4.6 l-2.3 2.5z" fill="#555"/>
<!-- pictures -->
<rect x="101.3" y="59.4" width="23.4" height="23.4" fill="#fff" stroke="#8c8c8c" stroke-width="1.1"/>
<path d="M102.6 81.6 V77 L108.4 70 h2.2 l3 3.4 V81.6z" fill="#c3d5ea"/>
<path d="M101 82.6 h12.5" stroke="#9a9a9a" stroke-width="1.6"/>
<circle cx="119.3" cy="64.9" r="2.8" fill="#f1c267"/>
<rect x="113.6" y="72.9" width="12.8" height="9" fill="#fff" stroke="#3a7cbf" stroke-width="1.6"/>
<path d="M120.1 82 v2.3 M116.9 84.7 h6.4" stroke="#3a7cbf" stroke-width="1.3"/>
<!-- online pictures -->
<rect x="136.3" y="57.7" width="11.6" height="11.4" fill="#fff" stroke="#8c8c8c" stroke-width="1"/>
<path d="M137.3 68.2 V65.5 L140 62.2 L142.6 65 V68.2z" fill="#b7cde8"/>
<circle cx="144.4" cy="60.4" r="1.3" fill="#f0b94d"/>
<circle cx="146.2" cy="66.8" r="4.3" fill="#2e75b6"/>
<path d="M142.3 66.8 h7.8 M146.2 62.8 v8 M143 64.7 h6.4 M143 68.9 h6.4" stroke="#fff" stroke-width=".8"/>
<ellipse cx="146.2" cy="66.8" rx="1.9" ry="4" stroke="#fff" stroke-width=".7"/>
<!-- screenshot -->
<rect x="138" y="79.6" width="11" height="8.6" stroke="#8c8c8c" stroke-width="1" stroke-dasharray="1.4 1.2"/>
<path d="M136 86.2 h1.6 l.8 -1.2 h3 l.8 1.2 h1.6 v4.8 h-7.8z" fill="#666"/>
<circle cx="139.9" cy="88.5" r="1.4" fill="#f1f1f1"/>
<path d="M147.6 85.8 v5.4 M144.9 88.5 h5.4" stroke="#2e75b6" stroke-width="1.5"/>
<path d="M206 83.2 h4.6 l-2.3 2.5z" fill="#555"/>
<!-- photo album -->
<rect x="136.6" y="97.6" width="11.4" height="9" fill="#fff" stroke="#6f6f6f" stroke-width="1"/>
<path d="M137.4 105.8 V103 L140.5 100.4 L144 103 L147.2 101 V105.8z" fill="#5b9a78"/>
<path d="M137.4 98.4 h9.8 v2.6 l-3.2 2 l-3.5 -2.6 l-3.1 2.6z" fill="#3b78b8"/>
<path d="M139 107.2 v2.6 h10.8 v-9 h-1.6" stroke="#8c8c8c" stroke-width="1"/>
<path d="M144 109 l4.6 -5 v5z" fill="#bdbdbd"/>
<path d="M223 103.2 h4.6 l-2.3 2.5z" fill="#555"/>
<!-- shapes -->
<circle cx="262.8" cy="65.4" r="7.3" fill="#fff" stroke="#5b93cf" stroke-width="1.1"/>
<rect x="245.6" y="61.8" width="14" height="14" fill="#fff" stroke="#5b93cf" stroke-width="1.1"/>
<path d="M257.5 67.4 L265.6 75.6 L257.5 83.8 L249.4 75.6z" fill="#fff" stroke="#5b93cf" stroke-width="1.1"/>
<path d="M255.6 107.2 h4.6 l-2.3 2.5z" fill="#555"/>
<!-- smartart -->
<path d="M285.8 61.2 H303 L308 68.1 L303 75 H285.8 L290.4 68.1z" fill="#74ab97"/>
<rect x="294.6" y="68.2" width="17.2" height="12.2" fill="#fff" stroke="#8c8c8c" stroke-width="1.1"/>
<path d="M300.4 71.6 H309 M300.4 74.3 H309 M300.4 77 H309" stroke="#a5a5a5" stroke-width="1"/>
<path d="M297.2 71.6 h1.4 M297.2 74.3 h1.4 M297.2 77 h1.4" stroke="#a5a5a5" stroke-width="1"/>
<!-- chart -->
<rect x="329.2" y="66.8" width="6" height="15.6" fill="#4a80bd"/>
<rect x="336.2" y="60.2" width="6" height="22.2" fill="#f0c678"/>
<rect x="343.2" y="64.2" width="5.8" height="18.2" fill="#7f7f7f"/>
<!-- store -->
<path d="M369 68.4 L381.3 66.4 V78 L369 76.2z" fill="#eb3c00"/>
<path d="M372.2 67.4 c.2 -3.4 4 -4 5 -1.4" stroke="#eb3c00" stroke-width="1"/>
<!-- my add-ins -->
<path d="M370.6 95 L376.2 92.2 L381.4 94.4 V101.6 L375.6 104.2 L370.6 101.2z" fill="#0f74d1"/>
<circle cx="371.8" cy="101.2" r="3.6" fill="#f1f1f1"/>
<circle cx="371.8" cy="101.2" r="2.7" fill="#0f74d1"/>
<path d="M446.8 97.4 h4.8 l-2.4 2.6z" fill="#555"/>
<!-- hyperlink -->
<circle cx="486" cy="69.8" r="10.5" fill="#fff" stroke="#7f7f7f" stroke-width="1.1"/>
<ellipse cx="486" cy="69.8" rx="4.8" ry="10.5" stroke="#7f7f7f" stroke-width="1"/>
<path d="M486 59.3 V80.3 M475.5 69.8 H496.5 M477.2 64.2 H494.8 M477.2 75.4 H494.8" stroke="#7f7f7f" stroke-width="1"/>
<g stroke="#f1f1f1" stroke-width="4.4"><rect x="486.6" y="78.2" width="8" height="5.2" rx="2.6"/><rect x="492.6" y="78.2" width="8" height="5.2" rx="2.6"/></g>
<g stroke="#3f7fc2" stroke-width="2.1"><rect x="486.6" y="78.2" width="8" height="5.2" rx="2.6"/><rect x="492.6" y="78.2" width="8" height="5.2" rx="2.6"/></g>
<!-- action -->
<rect x="519.6" y="62" width="21.4" height="19.6" stroke="#a8a8a8" stroke-width="1"/>
<g fill="#6a6a6a"><rect x="518.3" y="60.8" width="2.5" height="2.5"/><rect x="539.8" y="60.8" width="2.5" height="2.5"/><rect x="518.3" y="80.3" width="2.5" height="2.5"/><rect x="539.8" y="80.3" width="2.5" height="2.5"/></g>
<path d="M530.2 64.2 L532 69.4 H537.5 L533.1 72.7 L534.7 78 L530.2 74.8 L525.7 78 L527.3 72.7 L522.9 69.4 H528.4z" fill="#4682c4"/>
<!-- comment -->
<path d="M571.4 61.6 H592 a1.6 1.6 0 0 1 1.6 1.6 V75 a1.6 1.6 0 0 1 -1.6 1.6 H581.4 L575.6 81.6 L575 76.6 H571.4 a1.6 1.6 0 0 1 -1.6 -1.6 V63.2 a1.6 1.6 0 0 1 1.6 -1.6z" fill="#fff" stroke="#8c8c8c" stroke-width="1.1"/>
<path d="M573.3 56.6 V68 M567.6 62.3 H579" stroke="#f1f1f1" stroke-width="5.4"/>
<path d="M573.3 57.2 V67.6 M568 62.4 H578.6" stroke="#6aa690" stroke-width="3.2"/>
<!-- text box -->
<rect x="622.4" y="60.6" width="22.8" height="20.6" fill="#fff" stroke="#8c8c8c" stroke-width="1.1"/>
<text x="624.6" y="71" font-family="Liberation Sans, sans-serif" font-weight="bold" font-size="10" fill="#3b7bbf">A</text>
<path d="M634.4 64.2 H643 M634.4 66.8 H643 M634.4 69.4 H643 M625 73.6 H643 M625 76.2 H643 M625 78.6 H643" stroke="#b5b5b5" stroke-width="1"/>
<!-- header footer -->
<path d="M666.4 59.8 H679 L684.4 65.2 V83 H666.4z" fill="#fff" stroke="#8c8c8c" stroke-width="1.1"/>
<path d="M679 59.8 V65.2 H684.4" stroke="#8c8c8c" stroke-width="1"/>
<rect x="669" y="62.4" width="6.6" height="3.6" fill="#f0c468"/>
<rect x="669" y="76.6" width="12.8" height="4" fill="#f0c468"/>
<!-- wordart -->
<text x="0" y="0" transform="translate(710.6 80.8) scale(.84 1) skewX(-12)" font-family="Liberation Sans, sans-serif" font-style="italic" font-size="28" fill="#4682c4" stroke="#4682c4" stroke-width=".9">A</text>
<path d="M716.2 107 h4.8 l-2.4 2.6z" fill="#555"/>
<!-- date time -->
<rect x="743.6" y="58.2" width="10.4" height="9.6" fill="#fff" stroke="#6f6f6f" stroke-width="1"/>
<rect x="743.1" y="57.5" width="11.4" height="2.6" fill="#6a6a6a"/>
<rect x="745.4" y="62" width="3" height="3" stroke="#e8641e" stroke-width="1"/>
<circle cx="753.6" cy="66.8" r="3.7" fill="#fff" stroke="#3b7bbf" stroke-width="1.1"/>
<path d="M753.6 64.6 V66.9 H755.2" stroke="#3b7bbf" stroke-width=".9"/>
<!-- slide number -->
<rect x="743.8" y="78.6" width="13.2" height="10.6" rx="1" fill="#fff" stroke="#8c8c8c" stroke-width="1.1"/>
<path d="M747 81.4 h7" stroke="#a5a5a5" stroke-width="1"/>
<path d="M748.2 84 h4.6 M748.2 86.2 h4.6" stroke="#3b7bbf" stroke-width="1.2"/>
<!-- object -->
<rect x="744" y="98.6" width="13" height="11.2" fill="#fff" stroke="#3b7bbf" stroke-width="1.3"/>
<rect x="743.4" y="98" width="14.2" height="3.4" fill="#3b7bbf"/>
<!-- pi / omega -->
<text x="778" y="80.6" font-family="Liberation Serif, serif" font-style="italic" font-weight="bold" font-size="40" fill="#4682c4">π</text>
<text x="820.2" y="80.4" font-family="Liberation Serif, serif" font-weight="bold" font-size="29.5" fill="#b9b9b9">Ω</text>
<path d="M787.8 107.2 h4.8 l-2.4 2.6z" fill="#555"/>
<!-- video -->
<rect x="868.2" y="61.4" width="20.2" height="19" fill="#fff" stroke="#7a7a7a" stroke-width="1"/>
<rect x="867.7" y="60.9" width="21.2" height="3.9" fill="#7a7a7a"/>
<rect x="867.7" y="76.9" width="21.2" height="3.9" fill="#7a7a7a"/>
<path d="M869.6 62.9 H888 M869.6 78.9 H888" stroke="#fff" stroke-width="2" stroke-dasharray="2 1.4"/>
<path d="M875.2 107.2 h4.8 l-2.4 2.6z" fill="#555"/>
<!-- audio -->
<path d="M903 67.6 H908 L915.6 60 V82.2 L908 75 H903z" fill="#6e6e6e"/>
<path d="M918.6 65.8 A6.4 6.4 0 0 1 918.6 77" stroke="#4682c4" stroke-width="1.3"/>
<path d="M920.6 61.8 A10.8 10.8 0 0 1 920.6 80.6" stroke="#4682c4" stroke-width="1.3"/>
<path d="M911.4 107.2 h4.8 l-2.4 2.6z" fill="#555"/>
<!-- screen recording -->
<rect x="947.4" y="59.6" width="20" height="15.6" fill="#f8f8f8" stroke="#9a9a9a" stroke-width="1" stroke-dasharray="2 1.5"/>
<rect x="946.8" y="77.4" width="8.2" height="5.4" fill="#b4b4b4"/>
<rect x="945" y="76.4" width="7" height="2.6" fill="#3f7fc2"/>
<path d="M956 79.4 l3.2 -2.6 v5.2z" fill="#7a7a7a"/>
<path d="M960 79.4 h2.6" stroke="#8c8c8c" stroke-width="1" stroke-dasharray="1 .8"/>
<path d="M966.7 75.4 v7.2 M963.1 79 h7.2" stroke="#3f7fc2" stroke-width="1.7"/>
<!-- collapse caret -->
<path d="M1006.6 127 L1010.5 123.2 L1014.4 127" stroke="#666" stroke-width="1.2"/>
</svg>
<svg class="abs" style="left:0;top:546px" width="1024" height="21" viewBox="0 546 1024 21" fill="none" stroke="#5a5a5a" stroke-width="1">
<!-- spell -->
<path d="M79.6 552 c-1.6 -1.2 -3.6 -1.4 -5.4 -1 V559.6 c1.8 -.4 3.8 -.2 5.4 1 M79.6 552 V560.6 M79.6 552 c1 -.8 2.2 -1.2 3.4 -1.2"/>
<path d="M82 556.6 l1.6 1.8 l2.8 -4" stroke-width="1.1"/>
<path d="M79.6 560.6 c1 -.8 2.4 -1.2 3.6 -1.2 h2.6 v-2"/>
<!-- notes -->
<path d="M575.2 553.8 h4 l-2 -2.6z" fill="#5a5a5a" stroke="none"/>
<path d="M572.6 555.6 h9.4 M572.6 557.9 h9.4 M572.6 560.2 h6.6"/>
<!-- comments -->
<path d="M630.6 552.2 h10.4 v7 h-5.4 l-2.4 2.8 v-2.8 h-2.6z" fill="#5a5a5a" stroke="none"/>
<!-- normal view -->
<rect x="718.5" y="551" width="12" height="10.6"/>
<rect x="721.4" y="553.4" width="6.6" height="3.2"/>
<path d="M721 551 V561.6 M721 559 H730.5"/>
<!-- sorter -->
<rect x="751.6" y="551" width="4.6" height="4"/><rect x="758.8" y="551" width="4.6" height="4"/>
<rect x="751.6" y="557.4" width="4.6" height="4"/><rect x="758.8" y="557.4" width="4.6" height="4"/>
<!-- reading -->
<path d="M790 552.2 c-1.6 -1.2 -3.8 -1.4 -5.6 -1 V559.8 c1.8 -.4 4 -.2 5.6 1 c1.6 -1.2 3.8 -1.4 5.6 -1 V551.2 c-1.8 -.4 -4 -.2 -5.6 1z M790 552.2 V560.8"/>
<path d="M785.8 553.6 h2.8 M785.8 555.6 h2.8 M785.8 557.6 h2.8 M791.6 553.6 h2.8 M791.6 555.6 h2.8 M791.6 557.6 h2.8" stroke-width=".8"/>
<!-- slideshow -->
<path d="M816.6 551.6 h12.8" stroke-width="1.4"/>
<path d="M818 552 v5.6 h10 v-5.6 M823 557.6 v3.4 M820.4 561.4 h5.2"/>
<!-- zoom -->
<path d="M844.4 556.4 h4.8" stroke-width="1.6"/>
<path d="M853 556.4 h87" stroke="#a0a0a0"/>
<path d="M896.5 553.8 v5.2" stroke="#a0a0a0"/>
<rect x="878.2" y="551.2" width="3.6" height="9.6" fill="#5a5a5a" stroke="none"/>
<path d="M943 556.4 h7 M946.5 552.9 v7" stroke-width="1.6"/>
<!-- fit -->
<rect x="996.4" y="551.4" width="11.4" height="10.8"/>
<path d="M1002.1 553 v2.2 M1002.1 558.4 v2.2 M998 556.8 h2.2 M1004 556.8 h2.2" stroke-width="1"/>
<path d="M1001 554 l1.1 -1.2 l1.1 1.2 M1001 559.6 l1.1 1.2 l1.1 -1.2 M999 555.7 l-1.2 1.1 l1.2 1.1 M1005.2 555.7 l1.2 1.1 l-1.2 1.1" stroke-width=".8"/>
</svg>
<span class="t" style="left:298.40px;top:13.45px;font-size:10.1px;color:#ffffff;transform:scaleX(1.0124)">Presentation1 - PowerPoint</span>
<span class="t" style="left:555.50px;top:13.28px;font-size:10.3px;color:#f3d6cd;transform:scaleX(0.9354)">Picture Tools</span>
<span class="t" style="left:18.70px;top:35.94px;font-size:10.7px;color:#ffffff;transform:scaleX(0.8682)">File</span>
<span class="t" style="left:67.50px;top:35.94px;font-size:10.7px;color:#ffffff;transform:scaleX(0.9732)">Home</span>
<span class="t" style="left:121.00px;top:35.94px;font-size:10.7px;color:#b7472a;transform:scaleX(0.9156)">Insert</span>
<span class="t" style="left:172.00px;top:35.94px;font-size:10.7px;color:#ffffff;transform:scaleX(0.9002)">Design</span>
<span class="t" style="left:228.00px;top:35.94px;font-size:10.7px;color:#ffffff;transform:scaleX(0.9509)">Transitions</span>
<span class="t" style="left:302.50px;top:35.94px;font-size:10.7px;color:#ffffff;transform:scaleX(1.0090)">Animations</span>
<span class="t" style="left:380.50px;top:35.94px;font-size:10.7px;color:#ffffff;transform:scaleX(0.9209)">Slide Show</span>
<span class="t" style="left:455.50px;top:35.94px;font-size:10.7px;color:#ffffff;transform:scaleX(0.8917)">Review</span>
<span class="t" style="left:512.50px;top:35.94px;font-size:10.7px;color:#ffffff;transform:scaleX(0.9246)">View</span>
<span class="t" style="left:565.70px;top:35.94px;font-size:10.7px;color:#ffffff;transform:scaleX(0.9534)">Format</span>
<span class="t" style="left:644.00px;top:35.94px;font-size:10.7px;color:#fbe9e3;transform:scaleX(0.9906)">Tell me what you want to do...</span>
<span class="t" style="left:914.30px;top:35.94px;font-size:10.7px;color:#ffffff;transform:scaleX(0.9531)">Sign in</span>
<span class="t" style="left:976.80px;top:35.94px;font-size:10.7px;color:#ffffff;transform:scaleX(0.8959)">Share</span>
<span class="t" style="left:12.70px;top:90.45px;font-size:10.1px;color:#444444;transform:scaleX(0.9807)">New</span>
<span class="t" style="left:8.20px;top:104.45px;font-size:10.1px;color:#444444;transform:scaleX(0.9373)">Slide</span>
<span class="t" style="left:9.60px;top:120.62px;font-size:9.9px;color:#666666;transform:scaleX(0.9533)">Slides</span>
<span class="t" style="left:55.30px;top:90.45px;font-size:10.1px;color:#444444;transform:scaleX(0.9667)">Table</span>
<span class="t" style="left:53.30px;top:120.62px;font-size:9.9px;color:#666666;transform:scaleX(0.9089)">Tables</span>
<span class="t" style="left:95.10px;top:90.45px;font-size:10.1px;color:#444444;transform:scaleX(0.9859)">Pictures</span>
<span class="t" style="left:153.30px;top:60.45px;font-size:10.1px;color:#444444;transform:scaleX(1.0088)">Online Pictures</span>
<span class="t" style="left:153.30px;top:80.45px;font-size:10.1px;color:#444444;transform:scaleX(0.9696)">Screenshot</span>
<span class="t" style="left:153.30px;top:100.45px;font-size:10.1px;color:#444444;transform:scaleX(1.0665)">Photo Album</span>
<span class="t" style="left:147.00px;top:120.62px;font-size:9.9px;color:#666666;transform:scaleX(0.9493)">Images</span>
<span class="t" style="left:241.60px;top:90.45px;font-size:10.1px;color:#444444;transform:scaleX(0.9273)">Shapes</span>
<span class="t" style="left:278.30px;top:90.45px;font-size:10.1px;color:#444444;transform:scaleX(1.0022)">SmartArt</span>
<span class="t" style="left:327.00px;top:90.45px;font-size:10.1px;color:#444444;transform:scaleX(0.9848)">Chart</span>
<span class="t" style="left:272.00px;top:120.62px;font-size:9.9px;color:#666666;transform:scaleX(1.0459)">Illustrations</span>
<span class="t" style="left:385.00px;top:68.45px;font-size:10.1px;color:#444444;transform:scaleX(0.9465)">Store</span>
<span class="t" style="left:385.00px;top:95.45px;font-size:10.1px;color:#444444;transform:scaleX(1.0588)">My Add-ins</span>
<span class="t" style="left:393.80px;top:120.62px;font-size:9.9px;color:#666666;transform:scaleX(1.0195)">Add-ins</span>
<span class="t" style="left:465.60px;top:90.45px;font-size:10.1px;color:#444444;transform:scaleX(1.0250)">Hyperlink</span>
<span class="t" style="left:515.40px;top:90.45px;font-size:10.1px;color:#444444;transform:scaleX(1.0933)">Action</span>
<span class="t" style="left:495.30px;top:120.62px;font-size:9.9px;color:#666666;transform:scaleX(0.9474)">Links</span>
<span class="t" style="left:558.70px;top:90.45px;font-size:10.1px;color:#444444;transform:scaleX(1.0581)">Comment</span>
<span class="t" style="left:558.70px;top:120.62px;font-size:9.9px;color:#666666;transform:scaleX(0.9686)">Comments</span>
<span class="t" style="left:624.60px;top:90.45px;font-size:10.1px;color:#444444;transform:scaleX(0.9676)">Text</span>
<span class="t" style="left:625.40px;top:103.45px;font-size:10.1px;color:#444444;transform:scaleX(0.9455)">Box</span>
<span class="t" style="left:658.70px;top:90.45px;font-size:10.1px;color:#444444;transform:scaleX(0.9572)">Header</span>
<span class="t" style="left:654.50px;top:103.45px;font-size:10.1px;color:#444444;transform:scaleX(1.0242)">&amp; Footer</span>
<span class="t" style="left:699.30px;top:90.45px;font-size:10.1px;color:#444444;transform:scaleX(1.0398)">WordArt</span>
<span class="t" style="left:679.60px;top:120.62px;font-size:9.9px;color:#666666;transform:scaleX(0.8658)">Text</span>
<span class="t" style="left:769.80px;top:90.45px;font-size:10.1px;color:#444444;transform:scaleX(1.0323)">Equation</span>
<span class="t" style="left:814.70px;top:90.45px;font-size:10.1px;color:#a8a8a8;transform:scaleX(1.0474)">Symbol</span>
<span class="t" style="left:791.50px;top:120.62px;font-size:9.9px;color:#666666;transform:scaleX(0.9492)">Symbols</span>
<span class="t" style="left:865.20px;top:90.45px;font-size:10.1px;color:#444444;transform:scaleX(0.9916)">Video</span>
<span class="t" style="left:900.50px;top:90.45px;font-size:10.1px;color:#444444;transform:scaleX(1.0495)">Audio</span>
<span class="t" style="left:943.00px;top:90.45px;font-size:10.1px;color:#444444;transform:scaleX(0.9723)">Screen</span>
<span class="t" style="left:934.80px;top:103.45px;font-size:10.1px;color:#444444;transform:scaleX(1.0221)">Recording</span>
<span class="t" style="left:907.50px;top:120.62px;font-size:9.9px;color:#666666;transform:scaleX(1.0145)">Media</span>
<span class="t" style="left:7.00px;top:551.53px;font-size:10.0px;color:#444444;transform:scaleX(0.9609)">Slide 1 of 1</span>
<span class="t" style="left:100.70px;top:551.53px;font-size:10.0px;color:#444444;transform:scaleX(0.9859)">English (United States)</span>
<span class="t" style="left:587.00px;top:551.53px;font-size:10.0px;color:#444444;transform:scaleX(0.9570)">Notes</span>
<span class="t" style="left:645.00px;top:551.53px;font-size:10.0px;color:#444444;transform:scaleX(0.9515)">Comments</span>
<span class="t" style="left:964.20px;top:551.53px;font-size:10.0px;color:#444444;transform:scaleX(0.9082)">63 %</span>
<span class="t" style="left:12.40px;top:147.00px;font-size:13px;color:#d35a38;transform:scaleX(1.0000)">1</span>
<div class="abs" style="left:0;top:0;width:1024px;height:567px;border:1px solid #b7472a;border-top:0;border-bottom-width:1.5px;pointer-events:none"></div>
</body></html>
